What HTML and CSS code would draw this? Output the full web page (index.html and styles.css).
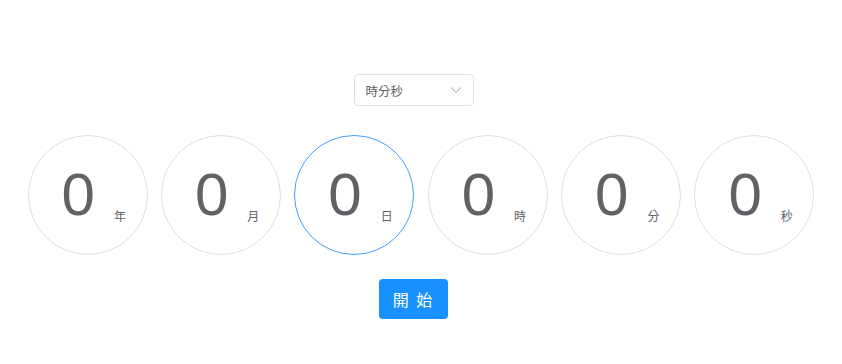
FILE: index.html
```html
<!DOCTYPE html>
<html lang="zh-Hant">
<head>
    <meta charset="UTF-8">
    <meta name="viewport" content="width=device-width, initial-scale=1.0">
    <title>倒數計時</title>
    <link rel="stylesheet" href="styles.css">
</head>
<body>

    <main class="timer">
        <!-- Unit picker -->
        <div class="picker">
            <span class="picker-value">時分秒</span>
            <svg class="picker-arrow" width="12" height="8" viewBox="0 0 12 8">
                <path d="M1 1.5 L6 6.5 L11 1.5" fill="none" stroke="#c0c4cc" stroke-width="1.1"/>
            </svg>
        </div>

        <!-- Count circles -->
        <div class="circles">
            <div class="circle"><span class="num">0</span><span class="unit">年</span></div>
            <div class="circle"><span class="num">0</span><span class="unit">月</span></div>
            <div class="circle active"><span class="num">0</span><span class="unit">日</span></div>
            <div class="circle"><span class="num">0</span><span class="unit">時</span></div>
            <div class="circle"><span class="num">0</span><span class="unit">分</span></div>
            <div class="circle"><span class="num">0</span><span class="unit">秒</span></div>
        </div>

        <button class="start-btn">開 始</button>
    </main>

</body>
</html>
```

FILE: styles.css
```css
/* Basic Reset */
* {
    margin: 0;
    padding: 0;
    box-sizing: border-box;
}

body {
    background-color: #fff;
    color: #606266;
    font-family: "Liberation Sans", Arial, "Noto Sans CJK TC", sans-serif;
}

.timer {
    display: flex;
    flex-direction: column;
    align-items: center;
    padding-top: 74px;
}

/* Select box */
.picker {
    width: 120px;
    height: 32px;
    margin-right: 15px;
    border: 1px solid #dcdfe6;
    border-radius: 4px;
    display: flex;
    align-items: center;
    justify-content: space-between;
    padding: 0 11px 0 11px;
}

.picker-value {
    font-size: 12.5px;
    color: #606266;
    font-family: "Noto Sans CJK TC", sans-serif;
}

/* Circles */
.circles {
    width: 787px;
    margin-top: 29px;
    display: flex;
    justify-content: space-between;
}

.circle {
    width: 120px;
    height: 120px;
    border: 1px solid #dcdfe6;
    border-radius: 50%;
    display: flex;
    align-items: center;
    padding-left: 33px;
}

.circle.active {
    border-color: #409eff;
}

.num {
    font-size: 60px;
    line-height: 60px;
    color: #606266;
}

.unit {
    font-size: 12px;
    font-family: "Noto Sans CJK TC", sans-serif;
    margin-left: 19px;
    align-self: flex-end;
    margin-bottom: 30px;
}

/* Start button */
.start-btn {
    margin-top: 24px;
    margin-right: 15px;
    width: 69px;
    height: 40px;
    background-color: #1890ff;
    color: #fff;
    border: none;
    border-radius: 4px;
    font-size: 16px;
    font-family: "Noto Sans CJK TC", sans-serif;
    letter-spacing: 2px;
    cursor: pointer;
}
```
